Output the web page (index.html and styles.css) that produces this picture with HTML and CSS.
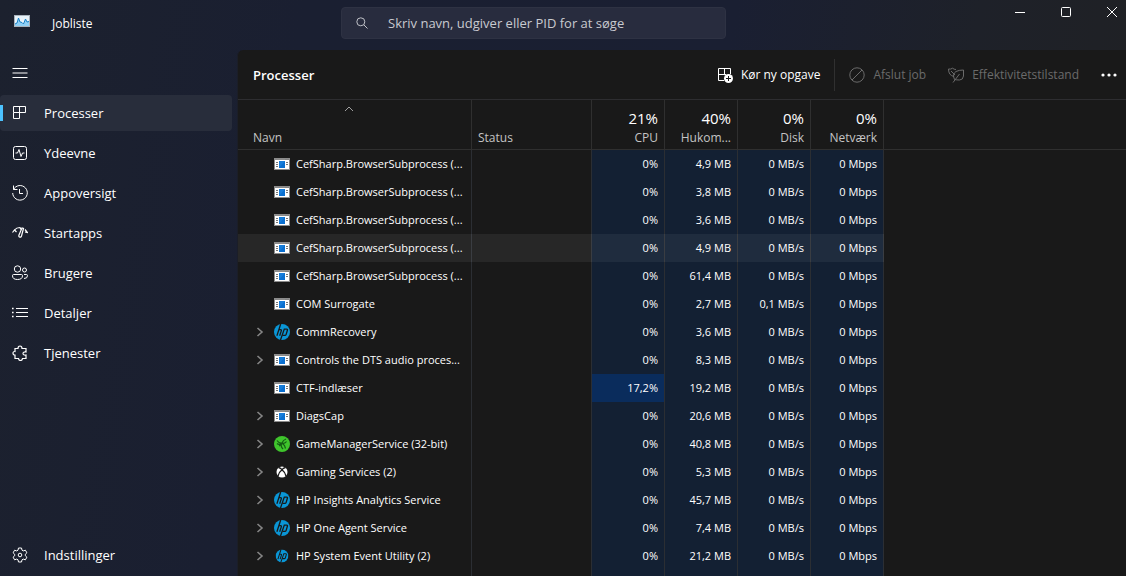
FILE: index.html
```html
<!DOCTYPE html>
<html lang="da">
<head>
  <meta charset="UTF-8">
  <meta name="viewport" content="width=device-width, initial-scale=1.0">
  <title>Jobliste</title>
  <link rel="stylesheet" href="styles.css">
</head>
<body>
  <!-- shared icons for the process list -->
  <svg class="sprite" aria-hidden="true">
    <symbol id="window" viewBox="0 0 16 12">
      <path fill="#8c8c8c" d="M0 0h16v12H0z"/>
      <path fill="#fff" d="M1 2h14v9H1z"/>
      <path fill="#0a6fd0" d="M5 3h6v7H5z"/>
      <path fill="#2b93e8" d="M5 3h6l-6 7z" opacity=".4"/>
      <path fill="none" stroke="#777" d="M2 4.500h2M2 6.500h2M2 8.500h2M12 4.500h2M12 6.500h2M12 1v1M14 1v1"/>
    </symbol>
    <symbol id="hp" viewBox="0 0 16 16">
      <circle cx="8" cy="8" r="8" fill="#0a96d6"/>
      <path fill="none" stroke="#191919" stroke-width="1.300" d="M6.700 0L2.900 11.800M4.600 5.700h1.800q1.300 0 .9 1.200L5.700 11.800M12.800 5.100h-2.500L6.500 16M12.800 5.100q.9 0 .6 1.200l-1.200 3.900q-.4 1.100-1.400 1.100h-1.900"/>
    </symbol>
    <symbol id="razer" viewBox="0 0 16 16">
      <circle cx="8" cy="8" r="8" fill="#3fc52c"/>
      <path fill="none" stroke="#145c14" stroke-width="1.200" d="M3 4.500q2 3 5 2.500M3 7.500q2 2 5-.5 1-3 4-4M8 7q3 1 4.500-1.500M8 7l2.500 2.500 1 3M8 7q-2 3 1 6M8 7q-1 2-3 3"/>
    </symbol>
    <symbol id="xbox" viewBox="0 0 16 16">
      <circle cx="8" cy="8" r="5.500" fill="#fff"/>
      <path fill="none" stroke="#191919" stroke-width="1.300" d="M4.500 3.500Q7 4 8 5.800 9 4 11.500 3.500M8 5.800Q4.500 8.500 4 12.200M8 5.800q3.500 2.700 4 6.400"/>
    </symbol>
    <symbol id="arrow" viewBox="0 0 8 10">
      <path fill="none" stroke="#858585" stroke-width="1.600" d="M1.500 1L6 5l-4.500 4"/>
    </symbol>
  </svg>

  <header class="titlebar">
    <div class="app">
      <svg class="app-icon" viewBox="0 0 16 12"><path fill="#a9b3bc" d="M0 0h16v12H0z"/><path fill="#e8f3fa" d="M1 1h14v10H1z"/><path fill="#8fd0f5" d="M1 9l2-1 1.500-5L6 7l2 1 2 1 1.500-5L13 7l2-.5V11H1z"/><path fill="none" stroke="#1581c8" d="M1 9l2-1 1.500-5L6 7l2 .5L9.500 9l2-5L13 7l2-.5"/></svg>
      <span>Jobliste</span>
    </div>
    <label class="search">
      <svg viewBox="0 0 12 12"><circle cx="4.800" cy="4.800" r="4"/><path d="M7.800 7.800l3.700 3.700"/></svg>
      <input type="text" aria-label="Søg" placeholder="Skriv navn, udgiver eller PID for at søge">
    </label>
    <div class="caption">
      <button aria-label="Minimer"><svg viewBox="0 0 10 10"><path d="M0 5.500h10"/></svg></button>
      <button aria-label="Maksimer"><svg viewBox="0 0 10 10"><rect x=".5" y=".5" width="9" height="9" rx="1"/></svg></button>
      <button aria-label="Luk"><svg viewBox="0 0 10 10"><path d="M0 0l10 10M10 0L0 10"/></svg></button>
    </div>
  </header>

  <div class="layout">
    <nav class="sidebar">
      <button class="menu" aria-label="Menu"><svg viewBox="0 0 16 16"><path d="M.5 3.500h15M.5 8h15M.5 12.500h15"/></svg></button>
      <a class="item active" href="#"><svg viewBox="0 0 16 16"><path d="M1.500 1.500h12v6h-12zM1.500 7.500v6h6v-12"/></svg>Processer</a>
      <a class="item" href="#"><svg viewBox="0 0 16 16"><rect x="1.500" y="1.500" width="13" height="13" rx="2"/><path d="M3.500 8h2L7 4.500l2 7L10.500 8h2"/></svg>Ydeevne</a>
      <a class="item" href="#"><svg viewBox="0 0 16 16"><path d="M1.500 .5v4h4M1.500 4.500A7.300 7.300 0 1 1 .7 8M7.500 4v4.500H11"/></svg>Appoversigt</a>
      <a class="item" href="#"><svg viewBox="0 0 16 16"><path stroke-width="1.200" d="M.5 7.500l2-2.500 2 2M2.500 5q2-2.500 5.500-2.500l1 2M13 4.500l2.500 3-2.500-.5M11.500 3.500L9.500 11q-.7 1.700-2 1-1-.6-.5-2l3-7z"/></svg>Startapps</a>
      <a class="item" href="#"><svg viewBox="0 0 16 16"><circle cx="5.500" cy="4" r="3.200"/><circle cx="12.500" cy="5" r="2"/><path d="M1.500 9.500h8q1 0 1 1.200 0 3.800-5 3.800t-5-3.800q0-1.200 1-1.200zM12 9.500h2.500q1 0 1 1.200 0 2.800-3.500 2.800"/></svg>Brugere</a>
      <a class="item" href="#"><svg viewBox="0 0 16 16"><path d="M4 3.500h12M4 7.500h12M4 11.500h12"/><path stroke-width="1.500" d="M0 3.500h1.600M0 7.500h1.600M0 11.500h1.600"/></svg>Detaljer</a>
      <a class="item" href="#"><svg viewBox="0 0 16 16"><path stroke-width="1.200" d="M3 3.500h3Q6 1 8 1t2 2.500h4V7q-3-.3-3 1.500t3 1.500v3.500h-3.500Q10.300 15.500 8.500 15.500T6.500 13.500H3V10Q1 10 1 8.200T3 6.500z"/></svg>Tjenester</a>
      <a class="item settings" href="#"><svg viewBox="0 0 16 16"><path d="M6.500 1h3l.5 2.200 1.300.7 2.100-.7 1.500 2.600L13.300 7.300v1.400l1.600 1.500-1.500 2.600-2.100-.7-1.300.7-.5 2.200h-3L6 12.800l-1.300-.7-2.100.7-1.500-2.600 1.600-1.500V7.300L1.100 5.800l1.500-2.600 2.100.7L6 3.200z"/><circle cx="8" cy="8" r="1.800"/></svg>Indstillinger</a>
    </nav>

    <main class="content">
      <div class="toolbar">
        <h1>Processer</h1>
        <button class="tool"><svg viewBox="0 0 16 16"><path d="M7 13.500H1.500v-12h12V7M7.500 1.500v6M1.500 7.500H9"/><circle cx="11.500" cy="11.500" r="4.500" fill="#fff" stroke="none"/><path stroke="#191919" d="M9 11.500h5M11.500 9v5"/></svg>Kør ny opgave</button>
        <span class="divider"></span>
        <button class="tool" disabled><svg viewBox="0 0 16 16"><circle cx="8" cy="8" r="7.200"/><path d="M13 3L3 13"/></svg>Afslut job</button>
        <button class="tool" disabled><svg viewBox="0 0 16 16"><path d="M6 9.500Q.5 8.500.5 2q2.500.5 4-.8Q6 2.500 8 2.500M3 4l4 4M6.500 12.500Q4 7 8 4.500q3-1.500 7.500-1.500v6q-.5 4-4 4-3 0-5-.5M5 15.500L11.500 7"/></svg>Effektivitetstilstand</button>
        <button class="more" aria-label="Mere"><svg viewBox="0 0 16 4"><circle cx="2" cy="2" r="1.600"/><circle cx="8" cy="2" r="1.600"/><circle cx="14" cy="2" r="1.600"/></svg></button>
      </div>

      <table class="processes">
        <colgroup><col class="col-name"><col class="col-status"><col class="col-num"><col class="col-num"><col class="col-num"><col class="col-num"><col></colgroup>
        <thead>
          <tr>
            <th class="name"><svg class="sort" viewBox="0 0 10 6"><path d="M1 5l4-4 4 4"/></svg>Navn</th>
            <th>Status</th>
            <th class="num"><b>21%</b>CPU</th>
            <th class="num"><b>40%</b>Hukom...</th>
            <th class="num"><b>0%</b>Disk</th>
            <th class="num"><b>0%</b>Netværk</th>
            <th class="rest"></th>
          </tr>
        </thead>
        <tbody>
          <tr><td><div class="proc"><i></i><svg><use href="#window"/></svg>CefSharp.BrowserSubprocess (...</div></td><td></td><td>0%</td><td>4,9 MB</td><td>0 MB/s</td><td>0 Mbps</td><td></td></tr>
          <tr><td><div class="proc"><i></i><svg><use href="#window"/></svg>CefSharp.BrowserSubprocess (...</div></td><td></td><td>0%</td><td>3,8 MB</td><td>0 MB/s</td><td>0 Mbps</td><td></td></tr>
          <tr><td><div class="proc"><i></i><svg><use href="#window"/></svg>CefSharp.BrowserSubprocess (...</div></td><td></td><td>0%</td><td>3,6 MB</td><td>0 MB/s</td><td>0 Mbps</td><td></td></tr>
          <tr class="hover"><td><div class="proc"><i></i><svg><use href="#window"/></svg>CefSharp.BrowserSubprocess (...</div></td><td></td><td>0%</td><td>4,9 MB</td><td>0 MB/s</td><td>0 Mbps</td><td></td></tr>
          <tr><td><div class="proc"><i></i><svg><use href="#window"/></svg>CefSharp.BrowserSubprocess (...</div></td><td></td><td>0%</td><td>61,4 MB</td><td>0 MB/s</td><td>0 Mbps</td><td></td></tr>
          <tr><td><div class="proc"><i></i><svg><use href="#window"/></svg>COM Surrogate</div></td><td></td><td>0%</td><td>2,7 MB</td><td>0,1 MB/s</td><td>0 Mbps</td><td></td></tr>
          <tr><td><div class="proc"><i><svg><use href="#arrow"/></svg></i><svg><use href="#hp"/></svg>CommRecovery</div></td><td></td><td>0%</td><td>3,6 MB</td><td>0 MB/s</td><td>0 Mbps</td><td></td></tr>
          <tr><td><div class="proc"><i><svg><use href="#arrow"/></svg></i><svg><use href="#window"/></svg>Controls the DTS audio proces...</div></td><td></td><td>0%</td><td>8,3 MB</td><td>0 MB/s</td><td>0 Mbps</td><td></td></tr>
          <tr><td><div class="proc"><i></i><svg><use href="#window"/></svg>CTF-indlæser</div></td><td></td><td class="busy">17,2%</td><td>19,2 MB</td><td>0 MB/s</td><td>0 Mbps</td><td></td></tr>
          <tr><td><div class="proc"><i><svg><use href="#arrow"/></svg></i><svg><use href="#window"/></svg>DiagsCap</div></td><td></td><td>0%</td><td>20,6 MB</td><td>0 MB/s</td><td>0 Mbps</td><td></td></tr>
          <tr><td><div class="proc"><i><svg><use href="#arrow"/></svg></i><svg><use href="#razer"/></svg>GameManagerService (32-bit)</div></td><td></td><td>0%</td><td>40,8 MB</td><td>0 MB/s</td><td>0 Mbps</td><td></td></tr>
          <tr><td><div class="proc"><i><svg><use href="#arrow"/></svg></i><svg><use href="#xbox"/></svg>Gaming Services (2)</div></td><td></td><td>0%</td><td>5,3 MB</td><td>0 MB/s</td><td>0 Mbps</td><td></td></tr>
          <tr><td><div class="proc"><i><svg><use href="#arrow"/></svg></i><svg><use href="#hp"/></svg>HP Insights Analytics Service</div></td><td></td><td>0%</td><td>45,7 MB</td><td>0 MB/s</td><td>0 Mbps</td><td></td></tr>
          <tr><td><div class="proc"><i><svg><use href="#arrow"/></svg></i><svg><use href="#hp"/></svg>HP One Agent Service</div></td><td></td><td>0%</td><td>7,4 MB</td><td>0 MB/s</td><td>0 Mbps</td><td></td></tr>
          <tr><td><div class="proc"><i><svg><use href="#arrow"/></svg></i><svg viewBox="-2 -2 20 20"><use href="#hp" width="16" height="16"/></svg>HP System Event Utility (2)</div></td><td></td><td>0%</td><td>21,2 MB</td><td>0 MB/s</td><td>0 Mbps</td><td></td></tr>
          <tr><td></td><td></td><td></td><td></td><td></td><td></td><td></td></tr>
        </tbody>
      </table>
    </main>
  </div>
</body>
</html>
```
FILE: styles.css
```css
* {
  box-sizing: border-box;
}
body {
  margin: 0;
  height: 100vh;
  display: flex;
  flex-direction: column;
  overflow: hidden;
  font-family: "Open Sans", "Noto Sans", sans-serif;
  font-size: 12px;
  color: #fff;
  background: linear-gradient(100deg, #1c212e 0%, #1a1f31 25%, #1a1f32 60%, #1e2129 80%, #202123 100%);
}
button {
  font: inherit;
  color: inherit;
  background: none;
  border: 0;
  padding: 0;
}
svg {
  flex: none;
  fill: none;
  stroke: currentColor;
}
.sprite {
  display: none;
}

/* title bar */
.titlebar {
  flex: none;
  height: 50px;
  display: flex;
  align-items: flex-start;
}
.app {
  width: 341px;
  padding: 14px 14px 0;
  display: flex;
  gap: 22px;
  line-height: 20px;
}
.app-icon {
  width: 16px;
  height: 12px;
  margin-top: 1px;
  stroke: none;
}
.search {
  flex: 0 1 385px;
  height: 32px;
  margin-top: 7px;
  padding: 0 14px;
  display: flex;
  align-items: center;
  gap: 20px;
  border: 1px solid #2e3243;
  border-radius: 4px;
  background: #282c3e;
  color: #c0c2c8;
}
.search svg {
  width: 12px;
  height: 12px;
}
.search input {
  flex: 1;
  min-width: 0;
  padding: 0;
  border: 0;
  outline: 0;
  background: none;
  color: #fff;
  font: inherit;
  font-size: 13px;
}
.search input::placeholder {
  color: #c8cad0;
  opacity: 1;
}
.caption {
  margin-left: auto;
  margin-right: -9px;
  display: flex;
}
.caption button {
  width: 46px;
  height: 24px;
  display: flex;
  align-items: center;
  justify-content: center;
}
.caption svg {
  width: 10px;
  height: 10px;
}

/* sidebar */
.layout {
  flex: 1;
  min-height: 0;
  display: flex;
}
.sidebar {
  flex: none;
  width: 237px;
  padding: 5px 5px 3px 0;
  display: flex;
  flex-direction: column;
  gap: 4px;
  font-size: 13px;
}
.sidebar svg {
  width: 16px;
  height: 16px;
}
.menu,
.item {
  height: 36px;
  padding-left: 12px;
  display: flex;
  align-items: center;
  gap: 16px;
  color: #fff;
  text-decoration: none;
}
.active {
  border-radius: 4px;
  background: linear-gradient(90deg, #4cc2ff, #4cc2ff) 0 50% / 3px 16px no-repeat #282d3b;
}
.settings {
  margin-top: auto;
}

/* content */
.content {
  flex: 1;
  min-width: 0;
  display: flex;
  flex-direction: column;
  overflow: hidden;
  border-left: 1px solid #1b1e28;
  border-top-left-radius: 6px;
  background: #191919;
}
.toolbar {
  flex: none;
  height: 50px;
  padding: 0 9px 0 15px;
  display: flex;
  align-items: center;
  border-bottom: 1px solid #2d2d30;
}
.toolbar h1 {
  margin: 0 auto 0 0;
  font-size: 13px;
  font-weight: 600;
}
.tool {
  display: flex;
  align-items: center;
  gap: 8px;
}
.tool svg {
  width: 16px;
  height: 16px;
}
.tool:disabled {
  margin-right: 22px;
  color: #6b6b6b;
}
.divider {
  width: 1px;
  height: 32px;
  margin: 0 14px;
  background: #303030;
}
.more svg {
  display: block;
  width: 16px;
  height: 4px;
  fill: #fff;
  stroke: none;
}

/* process list */
.processes {
  width: 100%;
  table-layout: fixed;
  border-collapse: separate;
  border-spacing: 0;
  font-size: 11px;
  line-height: 20px;
  white-space: nowrap;
}
.col-name {
  width: 234px;
}
.col-status {
  width: 120px;
}
.col-num {
  width: 73px;
}
th {
  height: 50px;
  padding: 0 6px 1px;
  vertical-align: bottom;
  text-align: left;
  font-size: 12px;
  font-weight: 400;
  color: #c4c4c4;
  border-right: 1px solid #2f2f2f;
  border-bottom: 1px solid #2f2f2f;
}
th.name {
  padding-left: 15px;
}
th.num {
  text-align: right;
}
th.rest {
  border-right: 0;
}
th b {
  display: block;
  font-size: 15px;
  font-weight: 400;
  color: #fff;
}
.sort {
  display: block;
  width: 10px;
  height: 6px;
  margin: 0 auto 16px 91px;
  stroke: #a0a0a0;
}
td {
  height: 28px;
  padding: 0 6px;
  text-align: right;
  border-right: 1px solid #2b2e33;
}
td:nth-child(-n+2) {
  padding: 0;
  text-align: left;
}
td:nth-child(n+3) {
  background: #132033;
}
td:last-child {
  border-right: 0;
  background: none;
}
td.busy {
  background: #0a2c5c;
}
.hover td {
  background: #272727;
  border-right-color: #3a3d42;
}
.hover td:nth-child(n+3) {
  background: #1f2c3e;
}
.hover td:last-child {
  background: none;
}
.proc {
  padding-left: 18px;
  display: flex;
  align-items: center;
}
.proc i {
  flex: none;
  width: 18px;
  display: flex;
}
.proc svg {
  width: 16px;
  height: 16px;
  margin-right: 6px;
  stroke: none;
}
.proc i svg {
  width: 8px;
  height: 10px;
  margin: 0;
}
```
